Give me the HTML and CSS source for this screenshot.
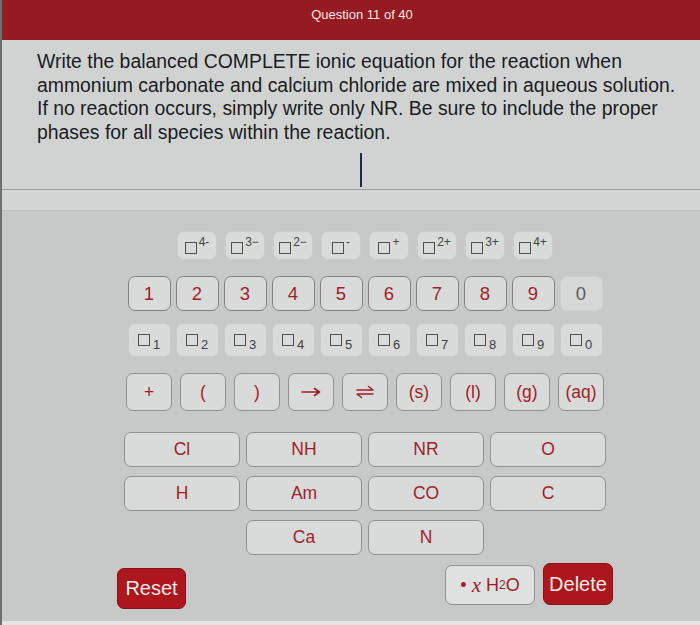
FILE: index.html
```html
<!DOCTYPE html>
<html>
<head>
<meta charset="utf-8">
<link rel="stylesheet" href="styles.css">
</head>
<body>
<div class="page">
  <header class="topbar">Question 11 of 40</header>
  <section class="question">
    <p class="prompt">Write the balanced COMPLETE ionic equation for the reaction when<br>ammonium carbonate and calcium chloride are mixed in aqueous solution.<br>If no reaction occurs, simply write only NR. Be sure to include the proper<br>phases for all species within the reaction.</p>
    <div class="answer"><span class="cursor"></span></div>
  </section>
  <div class="band"></div>
  <section class="keypad">
    <div class="row row-charge">
      <div class="key sm"><span class="box"></span><sup>4-</sup></div>
      <div class="key sm"><span class="box"></span><sup>3−</sup></div>
      <div class="key sm"><span class="box"></span><sup>2−</sup></div>
      <div class="key sm"><span class="box"></span><sup>-</sup></div>
      <div class="key sm"><span class="box"></span><sup>+</sup></div>
      <div class="key sm"><span class="box"></span><sup>2+</sup></div>
      <div class="key sm"><span class="box"></span><sup>3+</sup></div>
      <div class="key sm"><span class="box"></span><sup>4+</sup></div>
    </div>
    <div class="row row-digit">
      <div class="key dg">1</div>
      <div class="key dg">2</div>
      <div class="key dg">3</div>
      <div class="key dg">4</div>
      <div class="key dg">5</div>
      <div class="key dg">6</div>
      <div class="key dg">7</div>
      <div class="key dg">8</div>
      <div class="key dg">9</div>
      <div class="key dg faded">0</div>
    </div>
    <div class="row row-sub">
      <div class="key sb"><span class="box"></span><sub>1</sub></div>
      <div class="key sb"><span class="box"></span><sub>2</sub></div>
      <div class="key sb"><span class="box"></span><sub>3</sub></div>
      <div class="key sb"><span class="box"></span><sub>4</sub></div>
      <div class="key sb"><span class="box"></span><sub>5</sub></div>
      <div class="key sb"><span class="box"></span><sub>6</sub></div>
      <div class="key sb"><span class="box"></span><sub>7</sub></div>
      <div class="key sb"><span class="box"></span><sub>8</sub></div>
      <div class="key sb"><span class="box"></span><sub>9</sub></div>
      <div class="key sb"><span class="box"></span><sub>0</sub></div>
    </div>
    <div class="row row-sym">
      <div class="key sy">+</div>
      <div class="key sy">(</div>
      <div class="key sy">)</div>
      <div class="key sy"><svg class="arrow" width="20" height="10" viewBox="0 0 20 10"><path d="M1 5 H18 M13.5 1.5 L18.5 5 L13.5 8.5" fill="none" stroke="#a11e28" stroke-width="1.6" stroke-linecap="round" stroke-linejoin="round"/></svg></div>
      <div class="key sy"><svg class="arrow" width="18" height="14" viewBox="0 0 18 14"><path d="M1 5 H17 L12.5 1.5 M17 9 H1 L5.5 12.5" fill="none" stroke="#a11e28" stroke-width="1.5" stroke-linecap="round" stroke-linejoin="round"/></svg></div>
      <div class="key sy">(s)</div>
      <div class="key sy">(l)</div>
      <div class="key sy">(g)</div>
      <div class="key sy">(aq)</div>
    </div>
    <div class="grid">
      <div class="key el">Cl</div>
      <div class="key el">NH</div>
      <div class="key el">NR</div>
      <div class="key el">O</div>
      <div class="key el">H</div>
      <div class="key el">Am</div>
      <div class="key el">CO</div>
      <div class="key el">C</div>
      <div class="key el col2">Ca</div>
      <div class="key el">N</div>
    </div>
    <div class="actions">
      <div class="btn red reset">Reset</div>
      <div class="right">
        <div class="btn water">• <i>x</i> H<sub>2</sub>O</div>
        <div class="btn red del">Delete</div>
      </div>
    </div>
  </section>
  <div class="foot"></div>
</div>
</body>
</html>
```
FILE: styles.css
```css
html, body {
  margin: 0;
  padding: 0;
}
body {
  width: 700px;
  height: 625px;
  overflow: hidden;
  font-family: "Liberation Sans", Arial, sans-serif;
  background: #c6c9c8;
}
.page {
  width: 700px;
  height: 625px;
  display: flex;
  flex-direction: column;
  border-left: 2px solid #6d706f;
  box-sizing: border-box;
}
.topbar {
  height: 40px;
  flex: none;
  background: #951a22;
  color: #f2e6e6;
  font-size: 13px;
  text-align: center;
  line-height: 30px;
  padding-left: 22px;
  box-sizing: border-box;
}
.question {
  height: 150px;
  flex: none;
  background: #d1d3d3;
  border-bottom: 1px solid #9a9d9d;
  box-sizing: border-box;
  padding: 10px 0 0 35px;
}
.prompt {
  margin: 0;
  font-size: 19.4px;
  line-height: 23.5px;
  color: #1a1c1f;
  white-space: nowrap;
}
.answer {
  height: 40px;
  padding-left: 323px;
  padding-top: 9px;
  box-sizing: border-box;
}
.cursor {
  display: block;
  width: 2px;
  height: 34px;
  background: #1e2a44;
}
.band {
  height: 20px;
  flex: none;
  background: #d3d5d5;
  border-bottom: 1px solid #bcbfbe;
}
.keypad {
  flex: 1;
  padding-left: 28px;
  display: flex;
  flex-direction: column;
  align-items: center;
}
.row {
  display: flex;
  justify-content: center;
}
.key {
  box-sizing: border-box;
  display: flex;
  align-items: center;
  justify-content: center;
  background: #d9dbda;
  border-radius: 7px;
  color: #a11e28;
}
.row-charge {
  margin-top: 20px;
  gap: 8px;
}
.key.sm {
  width: 40px;
  height: 29px;
  border: 1px solid #c9cccb;
  color: #444;
}
.box {
  display: inline-block;
  width: 12px;
  height: 12px;
  border: 1.4px solid #4d4f50;
  box-sizing: border-box;
}
.key.sm .box { margin-top: 5px; }
.key.sm sup {
  font-size: 12px;
  line-height: 12px;
  vertical-align: 0;
  margin-left: 2px;
  margin-top: -7px;
}
.row-digit {
  margin-top: 16px;
  gap: 5px;
}
.key.dg {
  width: 43px;
  height: 35px;
  border: 1.3px solid #7f8282;
  font-size: 18.5px;
}
.key.dg.faded {
  border-color: #cfd1d0;
  color: #585b5c;
  background: #d6d8d7;
}
.row-sub {
  margin-top: 12px;
  gap: 5px;
}
.key.sb {
  width: 43px;
  height: 34px;
  border: 1px solid #c7cac9;
  color: #3d3f40;
}
.key.sb sub {
  font-size: 13px;
  line-height: 13px;
  margin-left: 3px;
  margin-top: 9px;
  vertical-align: 0;
}
.row-sym {
  margin-top: 16px;
  gap: 8px;
}
.key.sy {
  width: 46px;
  height: 38px;
  border: 1.3px solid #8e9191;
  font-size: 17.5px;
}
.arrow {
  display: block;
}
.grid {
  margin-top: 21px;
  display: grid;
  grid-template-columns: repeat(4, 116px);
  grid-auto-rows: 35px;
  column-gap: 6px;
  row-gap: 9px;
}
.key.el {
  border: 1.3px solid #8e9191;
  font-size: 17.5px;
}
.col2 { grid-column: 2; }
.actions {
  margin-top: 8px;
  width: 496px;
  display: flex;
  justify-content: space-between;
  align-items: flex-start;
}
.right {
  display: flex;
  gap: 8px;
  align-items: flex-start;
}
.btn {
  box-sizing: border-box;
  display: flex;
  align-items: center;
  justify-content: center;
  border-radius: 7px;
}
.btn.red {
  background: #ad161d;
  color: #f4eaea;
  font-size: 20px;
  border: 1px solid #8a1117;
}
.reset {
  width: 69px;
  height: 41px;
  margin-top: 5px;
}
.del {
  width: 70px;
  height: 42px;
}
.water {
  width: 90px;
  height: 40px;
  margin-top: 2px;
  background: #dfe1e0;
  border: 1.3px solid #8e9191;
  color: #a11e28;
  font-size: 18px;
  white-space: pre;
}
.water i {
  font-family: "Liberation Serif", "Times New Roman", serif;
  font-size: 21px;
}
.water sub {
  font-size: 12px;
}
.foot {
  height: 4px;
  flex: none;
  background: #e4e5e5;
}
```
